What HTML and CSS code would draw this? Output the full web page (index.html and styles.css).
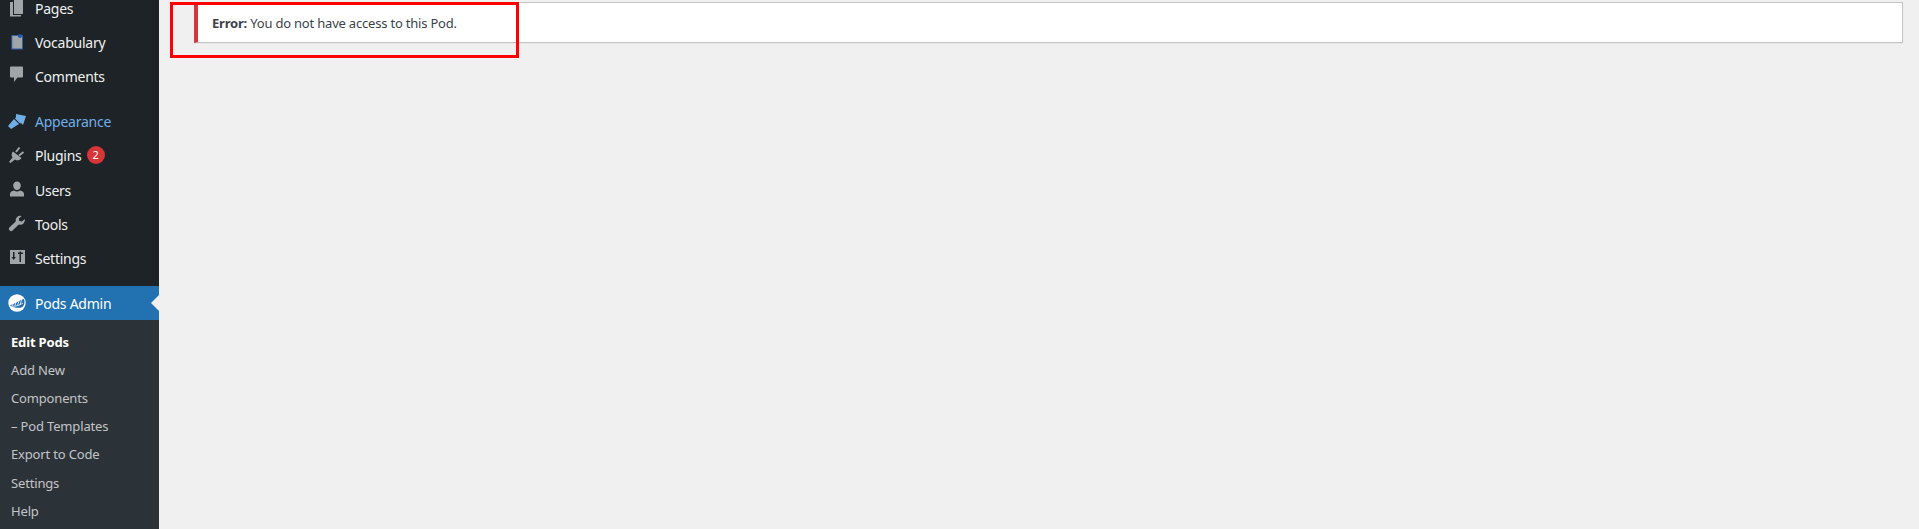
FILE: index.html
```html
<!DOCTYPE html>
<html lang="en">
<head>
  <meta charset="UTF-8" />
  <title>Edit Pods</title>
  <link rel="stylesheet" href="styles.css">
</head>
<body>

  <!-- Admin menu -->
  <nav class="sidebar">
    <ul class="menu">
      <li class="item item-first">
        <svg class="icon" viewBox="0 0 20 20"><path d="M7 2h9v15H7z M3 5h3v13h8v1.500H3z" fill="#a0a5aa"/></svg>
        <span class="label">Pages</span>
      </li>
      <li class="item">
        <svg class="icon" viewBox="0 0 20 20"><path d="M4.300 4h11.700v14.500H4.300z" fill="#2c5fa8"/><path d="M5.300 5h9.700v12.500H5.300z" fill="#a0a5aa"/><circle cx="13" cy="5" r="2" fill="#1e55b0"/></svg>
        <span class="label">Vocabulary</span>
      </li>
      <li class="item">
        <svg class="icon" viewBox="0 0 20 20"><path d="M4 1.500h11a1 1 0 0 1 1 1v9a1 1 0 0 1-1 1h-4.500l-3.500 4.500v-4.500H4a1 1 0 0 1-1-1v-9a1 1 0 0 1 1-1z" fill="#a0a5aa"/></svg>
        <span class="label">Comments</span>
      </li>
      <li class="item item-gap item-current">
        <svg class="icon" viewBox="0 0 20 20"><path d="M9 3l10 2-3 9-2-2-1 .5-5-5 1-1.500z" fill="#72aee6"/><path d="M7 8l5 5-8 5-3-3z" fill="#72aee6"/></svg>
        <span class="label">Appearance</span>
      </li>
      <li class="item">
        <svg class="icon" viewBox="0 0 20 20"><path d="M6 6.500l8.500 6.500c-1.500 2.500-4.500 3-6.500 1.500L3.500 18 2 17l3.500-4.500C4 10 4.500 8 6 6.500z" fill="#a0a5aa"/><path d="M9 7l3.500-4.500M12 10.500L16.500 7" stroke="#a0a5aa" stroke-width="2" fill="none"/></svg>
        <span class="label">Plugins</span>
        <span class="badge">2</span>
      </li>
      <li class="item">
        <svg class="icon" viewBox="0 0 20 20"><path d="M10 2.500a3.800 3.800 0 0 1 3.800 4c0 2.400-1.700 4.500-3.800 4.500S6.200 8.900 6.200 6.500a3.800 3.800 0 0 1 3.800-4z M13 11.500c2.400.5 4 1.800 4 3.500v2.500H3V15c0-1.700 1.600-3 4-3.500 1.800 1.300 4.200 1.300 6 0z" fill="#a0a5aa"/></svg>
        <span class="label">Users</span>
      </li>
      <li class="item">
        <svg class="icon" viewBox="0 0 20 20"><path d="M17.800 6l-2.900 2.600-2.600-.5-.5-2.600 2.900-2.400a4.600 4.600 0 0 0-6 5.400L2.600 14.200a2.200 2.200 0 1 0 3.200 3l6-5.700a4.600 4.600 0 0 0 6-5.500z" fill="#a0a5aa"/></svg>
        <span class="label">Tools</span>
      </li>
      <li class="item">
        <svg class="icon" viewBox="0 0 20 20"><path fill-rule="evenodd" d="M3 3h15v14H3z M6 5v5H4.500l2.200 3 2.200-3H7.500V5z M12.500 5.500h-1.500v1.500h1.500V15H14V7h2V5.500h-2V4.500h-1.500z" fill="#a0a5aa"/></svg>
        <span class="label">Settings</span>
      </li>
      <li class="item item-gap item-active">
        <svg class="icon" viewBox="0 0 20 20"><circle cx="10" cy="10" r="8.700" fill="#fff"/><path d="M2.500 12.500c4-1 8-4.500 14.500-6.500 1 3 .5 6-1.500 8-3.500 1.500-8 1-13-1.500z" fill="#2271b1"/><path d="M5.500 12.500l1-2.500M8 12.500l1-3.500M10.500 12.500l1.500-4.500M13 12l1.500-5M3.500 13c4 .5 8 0 12.500-3" stroke="#fff" stroke-width=".8" fill="none"/></svg>
        <span class="label">Pods Admin</span>
      </li>
    </ul>
    <ul class="submenu">
      <li class="sub-current">Edit Pods</li>
      <li>Add New</li>
      <li>Components</li>
      <li>– Pod Templates</li>
      <li>Export to Code</li>
      <li>Settings</li>
      <li>Help</li>
    </ul>
  </nav>

  <!-- Main content -->
  <main class="content">
    <div class="notice">
      <p><strong>Error:</strong> You do not have access to this Pod.</p>
    </div>
    <div class="highlight"></div>
  </main>

</body>
</html>
```

FILE: styles.css
```css
html, body {
  height: 100%;
}
body {
  margin: 0;
  display: flex;
  overflow: hidden;
  font-family: "Noto Sans", "Open Sans", sans-serif;
  font-size: 13px;
  background: #f0f0f1;
  color: #3c434a;
}
ul {
  list-style: none;
  margin: 0;
  padding: 0;
}
.sidebar {
  width: 159px;
  flex-shrink: 0;
  background: #1d2327;
  color: #f0f0f1;
  font-size: 14px;
  letter-spacing: -0.25px;
}
.item {
  position: relative;
  display: flex;
  align-items: center;
  height: 34.2px;
  padding-left: 7px;
}
.item-first {
  margin-top: -10px;
}
.item-gap {
  margin-top: 11px;
}
.icon {
  width: 20px;
  height: 20px;
  margin-right: 8px;
  flex-shrink: 0;
}
.label {
  padding-top: 2px;
}
.item-current {
  color: #72aee6;
}
.item-active {
  background: #2271b1;
  color: #fff;
}
.item-active::after {
  content: "";
  position: absolute;
  right: 0;
  top: 50%;
  margin-top: -8px;
  border: 8px solid transparent;
  border-right-color: #f0f0f1;
  border-left-width: 0;
}
.badge {
  display: inline-block;
  width: 18px;
  height: 18px;
  line-height: 18px;
  margin-left: 5px;
  border-radius: 50%;
  background: #d63638;
  color: #fff;
  font-size: 11px;
  text-align: center;
}
.submenu {
  background: #2c3338;
  padding: 7px 0 8px;
  color: #c3c4c7;
  font-size: 13px;
  letter-spacing: -0.16px;
}
.submenu li {
  height: 28.2px;
  line-height: 30.2px;
  padding-left: 11px;
}
.submenu .sub-current {
  color: #fff;
  font-weight: 700;
}
.content {
  position: relative;
  flex: 1;
  padding: 2px 16px 0 35px;
}
.notice {
  box-sizing: border-box;
  display: flex;
  align-items: center;
  height: 41px;
  padding-left: 14px;
  background: #fff;
  border: 1px solid #c3c4c7;
  border-left: 4px solid #d63638;
  box-shadow: 0 1px 1px rgba(0,0,0,0.04);
  letter-spacing: -0.2px;
}
.notice p {
  margin: 0;
}
.highlight {
  position: absolute;
  left: 11px;
  top: 2px;
  width: 343px;
  height: 50px;
  border: 3px solid #f00;
}
```
